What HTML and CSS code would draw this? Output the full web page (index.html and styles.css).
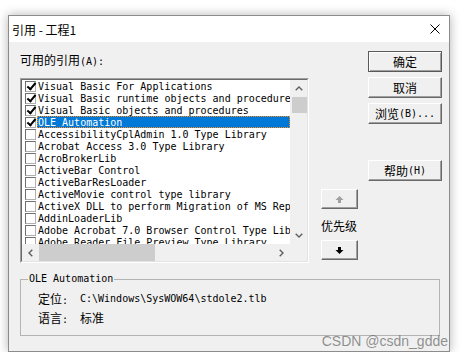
FILE: index.html
```html
<!DOCTYPE html>
<html lang="zh-CN">
<head>
    <meta charset="UTF-8">
    <meta name="viewport" content="width=device-width, initial-scale=1.0">
    <title>引用 - 工程1</title>
    <link rel="stylesheet" href="styles.css">
</head>
<body>
    <div class="window">
        <div class="titlebar">
            <span class="title">引用 - 工程1</span>
            <svg class="close" width="10" height="10" viewBox="0 0 10 10">
                <path d="M0.5 0.5 L9.5 9.5 M9.5 0.5 L0.5 9.5" stroke="#000" stroke-width="1" fill="none"/>
            </svg>
        </div>
        <div class="client">
            <div class="top">
                <div class="refs">
                    <div class="caption">可用的引用<span class="a">(A):</span></div>
                    <div class="listbox">
                        <div class="list-inner">
                            <div class="list-main">
                                <div class="rows">
                                    <div class="row"><span class="cb on"></span><span class="name">Visual Basic For Applications</span></div>
                                    <div class="row"><span class="cb on"></span><span class="name">Visual Basic runtime objects and procedures</span></div>
                                    <div class="row"><span class="cb on"></span><span class="name">Visual Basic objects and procedures</span></div>
                                    <div class="row sel"><span class="cb on"></span><span class="name">OLE Automation</span></div>
                                    <div class="row"><span class="cb"></span><span class="name">AccessibilityCplAdmin 1.0 Type Library</span></div>
                                    <div class="row"><span class="cb"></span><span class="name">Acrobat Access 3.0 Type Library</span></div>
                                    <div class="row"><span class="cb"></span><span class="name">AcroBrokerLib</span></div>
                                    <div class="row"><span class="cb"></span><span class="name">ActiveBar Control</span></div>
                                    <div class="row"><span class="cb"></span><span class="name">ActiveBarResLoader</span></div>
                                    <div class="row"><span class="cb"></span><span class="name">ActiveMovie control type library</span></div>
                                    <div class="row"><span class="cb"></span><span class="name">ActiveX DLL to perform Migration of MS Repository</span></div>
                                    <div class="row"><span class="cb"></span><span class="name">AddinLoaderLib</span></div>
                                    <div class="row"><span class="cb"></span><span class="name">Adobe Acrobat 7.0 Browser Control Type Library</span></div>
                                    <div class="row"><span class="cb"></span><span class="name">Adobe Reader File Preview Type Library</span></div>
                                </div>
                                <div class="vscroll">
                                    <div class="sb-btn">
                                        <svg width="8" height="5" viewBox="0 0 8 5"><path d="M0.7 4.3 L4 1 L7.3 4.3" stroke="#606060" stroke-width="1.4" fill="none"/></svg>
                                    </div>
                                    <div class="thumb-v"></div>
                                    <div class="track"></div>
                                    <div class="sb-btn">
                                        <svg width="8" height="5" viewBox="0 0 8 5"><path d="M0.7 0.7 L4 4 L7.3 0.7" stroke="#606060" stroke-width="1.4" fill="none"/></svg>
                                    </div>
                                </div>
                            </div>
                            <div class="hscroll">
                                <div class="sb-btn">
                                    <svg width="5" height="8" viewBox="0 0 5 8"><path d="M4.3 0.7 L1 4 L4.3 7.3" stroke="#606060" stroke-width="1.4" fill="none"/></svg>
                                </div>
                                <div class="thumb-h"></div>
                                <div class="track"></div>
                                <div class="sb-btn">
                                    <svg width="5" height="8" viewBox="0 0 5 8"><path d="M0.7 0.7 L4 4 L0.7 7.3" stroke="#606060" stroke-width="1.4" fill="none"/></svg>
                                </div>
                                <div class="corner"></div>
                            </div>
                        </div>
                    </div>
                </div>
                <div class="priority">
                    <div class="arrow-btn">
                        <svg width="9" height="9" viewBox="0 0 9 9"><polygon points="4.5,1 8.5,5 6,5 6,8 3,8 3,5 0.5,5" fill="#a0a0a0"/></svg>
                    </div>
                    <div class="priority-label">优先级</div>
                    <div class="arrow-btn down">
                        <svg width="9" height="9" viewBox="0 0 9 9"><polygon points="4.5,8 8.5,4 6,4 6,1 3,1 3,4 0.5,4" fill="#000"/></svg>
                    </div>
                </div>
                <div class="actions">
                    <div class="btn default">确定</div>
                    <div class="btn">取消</div>
                    <div class="btn">浏览<span class="a">(B)...</span></div>
                    <div class="btn help">帮助<span class="a">(H)</span></div>
                </div>
            </div>
            <fieldset class="info">
                <legend>OLE Automation</legend>
                <div class="info-row"><span class="k">定位<span class="a">:</span></span><span class="v">C:\Windows\SysWOW64\stdole2.tlb</span></div>
                <div class="info-row"><span class="k">语言<span class="a">:</span></span><span>标准</span></div>
            </fieldset>
        </div>
        <div class="watermark">CSDN @csdn_gdde</div>
    </div>
</body>
</html>
```

FILE: styles.css
```css
body {
    margin: 0;
    background: #fff;
    font-family: "Noto Sans CJK SC", sans-serif;
    font-size: 12px;
    color: #000;
}

.a, .rows, legend, .v {
    font-family: "DejaVu Sans Mono", "Noto Sans CJK SC", monospace;
    font-size: 10px;
}

.window {
    position: relative;
    margin: 15px 0 0 8px;
    width: 440px;
    height: 335px;
    border: 1px solid #8c8c8c;
    background: #f0f0f0;
    box-shadow: 0 0 10px rgba(0,0,0,0.3);
}

.titlebar {
    height: 26px;
    background: #fff;
    display: flex;
    align-items: center;
    justify-content: space-between;
    padding: 0 9px 0 3px;
}

.title {
    line-height: 16px;
    padding-top: 2px;
}

.client {
    padding: 9px 0 0 11px;
}

.top {
    display: flex;
    align-items: flex-start;
}

.refs {
    width: 289px;
    margin-right: 12px;
}

.caption {
    margin-top: 2px;
    height: 14px;
    line-height: 14px;
}

.listbox {
    margin-top: 11px;
    height: 185px;
    box-sizing: border-box;
    border: 1px solid;
    border-color: #a0a0a0 #fff #fff #a0a0a0;
}

.list-inner {
    height: 100%;
    box-sizing: border-box;
    border: 1px solid;
    border-color: #696969 #e3e3e3 #e3e3e3 #696969;
    background: #fff;
}

.list-main {
    display: flex;
    height: 164px;
}

.rows {
    flex: 1;
    min-width: 0;
    overflow: hidden;
}

.row {
    display: flex;
    align-items: center;
    height: 12px;
    padding-left: 3px;
    white-space: nowrap;
}

.cb {
    position: relative;
    flex: none;
    width: 11px;
    height: 11px;
    box-sizing: border-box;
    border: 1px solid;
    border-color: #6f6f6f #b0b0b0 #b0b0b0 #6f6f6f;
    background: #fff;
    margin-right: 1px;
}

.cb.on::after {
    content: "";
    position: absolute;
    left: 3px;
    top: -1px;
    width: 3px;
    height: 7px;
    border: solid #000;
    border-width: 0 2px 2px 0;
    transform: rotate(40deg);
}

.name {
    flex: 1;
    min-width: 0;
    overflow: hidden;
    height: 12px;
    line-height: 13px;
    padding-left: 1px;
}

.row.sel .name {
    background: #0078d7;
    color: #fff;
    outline: 1px dotted #ff8c1a;
    outline-offset: -1px;
}

.vscroll {
    width: 17px;
    flex: none;
    display: flex;
    flex-direction: column;
    background: #f0f0f0;
}

.sb-btn {
    flex: none;
    width: 17px;
    height: 17px;
    display: flex;
    align-items: center;
    justify-content: center;
}

.track {
    flex: 1;
}

.thumb-v {
    height: 16px;
    margin-left: 2px;
    background: #cdcdcd;
}

.hscroll {
    display: flex;
    height: 17px;
    background: #f0f0f0;
}

.thumb-h {
    width: 116px;
    background: #cdcdcd;
}

.corner {
    width: 17px;
    background: #f0f0f0;
}

.priority {
    width: 37px;
    margin-right: 10px;
    padding-top: 138px;
    display: flex;
    flex-direction: column;
}

.arrow-btn, .btn {
    box-sizing: border-box;
    display: flex;
    align-items: center;
    justify-content: center;
    background: #f0f0f0;
    border: 1px solid;
    border-color: #fff #696969 #696969 #fff;
    box-shadow: inset -1px -1px #a0a0a0;
}

.arrow-btn {
    height: 20px;
}

.arrow-btn.down {
    margin-top: 6px;
}

.priority-label {
    margin-top: 9px;
    line-height: 16px;
    white-space: nowrap;
}

.actions {
    width: 74px;
    display: flex;
    flex-direction: column;
}

.btn {
    height: 21px;
    margin-bottom: 5px;
    line-height: 16px;
}

.btn.default {
    border-color: #5a5a5a;
    box-shadow: inset 1px 1px #fff, inset -1px -1px #a0a0a0;
}

.btn.help {
    margin-top: 31px;
}

.info {
    width: 420px;
    box-sizing: border-box;
    margin: 10px 0 0 0;
    padding: 4px 0 8px 7px;
    border: 1px solid #b4b4b4;
    min-width: 0;
}

legend {
    padding: 0 1px;
    line-height: 12px;
}

.info-row {
    display: flex;
    align-items: center;
    height: 19px;
    margin-left: 10px;
}

.k {
    width: 42px;
}

.watermark {
    position: absolute;
    right: 1px;
    bottom: 2px;
    font-family: "Liberation Sans", sans-serif;
    font-size: 14px;
    line-height: 16px;
    color: rgba(110,110,110,0.75);
}
```
